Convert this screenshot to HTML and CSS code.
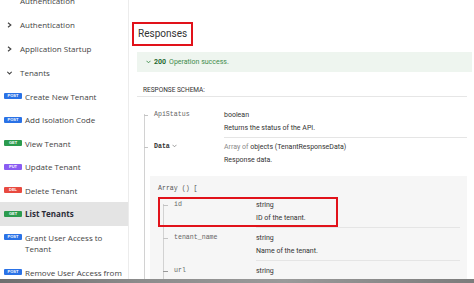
FILE: index.html
```html
<!DOCTYPE html>
<html>
<head>
<meta charset="utf-8">
<link rel="stylesheet" href="styles.css">
</head>
<body>
<div class="page">
  <nav class="sidebar">
    <ul class="nav">
      <li class="cat"><span class="chev-space"></span>Authentication</li>
      <li class="cat"><svg class="chev" viewBox="0 0 5 6"><path d="M1 0.8 L3.8 3 L1 5.2" fill="none" stroke="#444" stroke-width="1.2"/></svg>Authentication</li>
      <li class="cat"><svg class="chev" viewBox="0 0 5 6"><path d="M1 0.8 L3.8 3 L1 5.2" fill="none" stroke="#444" stroke-width="1.2"/></svg>Application Startup</li>
      <li class="cat"><svg class="chev" viewBox="0 0 5 6"><path d="M0.3 1.8 L2.5 4 L4.7 1.8" fill="none" stroke="#444" stroke-width="1.1"/></svg>Tenants</li>
      <li class="ep"><span class="badge post">POST</span><span class="ep-label">Create New Tenant</span></li>
      <li class="ep"><span class="badge post">POST</span><span class="ep-label">Add Isolation Code</span></li>
      <li class="ep"><span class="badge get">GET</span><span class="ep-label">View Tenant</span></li>
      <li class="ep"><span class="badge put">PUT</span><span class="ep-label">Update Tenant</span></li>
      <li class="ep"><span class="badge del">DEL</span><span class="ep-label">Delete Tenant</span></li>
      <li class="ep active"><span class="badge get">GET</span><span class="ep-label">List Tenants</span></li>
      <li class="ep"><span class="badge post">POST</span><span class="ep-label">Grant User Access to Tenant</span></li>
      <li class="ep"><span class="badge post">POST</span><span class="ep-label">Remove User Access from Tenant</span></li>
    </ul>
  </nav>
  <main class="main">
    <h2 class="resp-title">Responses</h2>
    <div class="resp-status">
      <svg class="status-chev" viewBox="0 0 5 4"><path d="M0.5 0.8 L2.5 2.8 L4.5 0.8" fill="none" stroke="#3d8b4b" stroke-width="0.9"/></svg>
      <span class="code">200</span><span class="status-text">Operation success.</span>
    </div>
    <div class="schema-label">Response Schema:</div>
    <div class="tree outer">
      <div class="prop">
        <div class="pname">ApiStatus</div>
        <div class="pdesc"><div>boolean</div><div>Returns the status of the API.</div></div>
      </div>
      <div class="prop">
        <div class="pname strong">Data<svg class="data-chev" viewBox="0 0 5 4"><path d="M0.5 0.8 L2.5 2.8 L4.5 0.8" fill="none" stroke="#777" stroke-width="0.7"/></svg></div>
        <div class="pdesc nob"><div><span class="muted">Array of</span> objects (TenantResponseData)</div><div>Response data.</div></div>
      </div>
      <div class="array-box">
        <div class="array-title">Array () [</div>
        <div class="tree inner">
          <div class="prop">
            <div class="highlight"></div>
            <div class="pname">id</div>
            <div class="pdesc"><div>string</div><div>ID of the tenant.</div></div>
          </div>
          <div class="prop">
            <div class="pname">tenant_name</div>
            <div class="pdesc"><div>string</div><div>Name of the tenant.</div></div>
          </div>
          <div class="prop">
            <div class="pname dark-tick">url</div>
            <div class="pdesc"><div>string</div><div>URL of the tenant.</div></div>
          </div>
        </div>
      </div>
    </div>
  </main>
</div>
<div class="bottom-shade"></div>
</body>
</html>
```
FILE: styles.css
```css
html, body {
  margin: 0;
  padding: 0;
}
body {
  width: 474px;
  height: 283px;
  overflow: hidden;
  background: #fff;
  font-family: Roboto, "Liberation Sans", sans-serif;
  color: #333;
}
.page {
  display: flex;
  height: 283px;
}

/* sidebar */
.sidebar {
  width: 128px;
  flex: none;
  border-right: 1px solid #ececec;
  font-family: "Open Sans", "Noto Sans", sans-serif;
  font-size: 8px;
  color: #444;
  overflow: hidden;
}
.nav {
  list-style: none;
  margin: -11.5px 0 0;
  padding: 0;
}
.cat {
  height: 24px;
  display: flex;
  align-items: center;
  padding-left: 7px;
}
.chev, .chev-space {
  width: 5px;
  height: 6px;
  margin-right: 8px;
  flex: none;
}
.ep {
  display: flex;
  align-items: flex-start;
  padding: 6px 4px 6px 4px;
  line-height: 11.5px;
}
.ep.active {
  background: #e4e4e4;
  font-weight: 700;
  color: #2c2c38;
}
.badge {
  flex: none;
  width: 18px;
  height: 6px;
  margin-top: 2.75px;
  margin-right: 3px;
  border-radius: 1px;
  color: #fff;
  font-family: "Liberation Sans", sans-serif;
  font-weight: 700;
  font-size: 4px;
  line-height: 6px;
  text-align: center;
}
.badge.post { background: #2a72e6; }
.badge.get { background: #2b9b4e; }
.badge.put { background: #8a5cf2; }
.badge.del { background: #e84a40; }
.ep-label {
  min-width: 0;
}

/* main */
.main {
  flex: 1;
  min-width: 0;
  padding: 22px 2px 0 8px;
}
.resp-title {
  margin: 0 0 6px -5px;
  width: 61px;
  height: 24px;
  box-sizing: border-box;
  border: 2px solid #e1121a;
  padding-left: 4px;
  font-size: 10px;
  font-weight: 400;
  line-height: 20px;
  color: #333;
}
.resp-status {
  height: 20px;
  background: #eef5ef;
  display: flex;
  align-items: center;
  padding-left: 9px;
  font-size: 7px;
  color: #3d8b4b;
}
.status-chev {
  width: 5px;
  height: 4px;
  margin-right: 3px;
}
.code {
  font-weight: 700;
  color: #1f6a30;
  margin-right: 3px;
}
.schema-label {
  margin: 13px 5px 0 0;
  padding-left: 6px;
  font-size: 6.5px;
  line-height: 11px;
  text-transform: uppercase;
  border-bottom: 1px solid #e6e6e6;
  color: #333;
}

/* property tree */
.tree {
  background: linear-gradient(#d2d2d2, #d2d2d2) no-repeat;
  background-size: 1px 100%;
}
.tree.outer {
  margin: 9px 5px 0 7px;
  background-position: 0 8px;
}
.prop {
  display: flex;
  position: relative;
  padding-top: 3px;
}
.pname {
  position: relative;
  flex: none;
  width: 80px;
  box-sizing: border-box;
  padding-left: 10px;
  font-family: "Liberation Mono", monospace;
  font-size: 6.6px;
  line-height: 12.5px;
  color: #666;
}
.pname::before {
  content: "";
  position: absolute;
  left: 0;
  top: 6px;
  width: 4px;
  height: 1px;
  background: #c4c4c4;
}
.pname.strong {
  font-weight: 700;
  color: #333;
}
.data-chev {
  width: 5px;
  height: 4px;
  margin-left: 2px;
}
.pdesc {
  flex: 1;
  min-width: 0;
  font-size: 7px;
  line-height: 12.5px;
  padding-bottom: 3px;
  border-bottom: 1px solid #e5e5e5;
  color: #333;
}
.pdesc.nob {
  border-bottom: none;
}
.muted {
  color: #8a8a8a;
}
.array-box {
  margin: 7px 0 0 6px;
  padding: 6.75px 7px 0 8px;
  background: #f6f6f6;
  height: 200px;
}
.array-title {
  font-family: "Liberation Mono", monospace;
  font-size: 6.6px;
  line-height: 12.5px;
  color: #555;
}
.tree.inner {
  margin-left: 5px;
  background-position: 0 9px;
}
.tree.inner .prop {
  padding-top: 4px;
}
.tree.inner .pname {
  width: 93px;
  padding-left: 11px;
}
.tree.inner .pname::before {
  width: 5px;
}
.pname.dark-tick::before {
  background: #999;
  width: 7px;
}
.highlight {
  position: absolute;
  left: -5px;
  top: 1.75px;
  width: 180px;
  height: 30px;
  box-sizing: border-box;
  border: 2px solid #e1121a;
}
.bottom-shade {
  position: fixed;
  left: 0;
  right: 0;
  bottom: 0;
  height: 4px;
  background: linear-gradient(to right, #6f6f6f, #8c8c8c 30%, #9a9a9a 60%, #7c7c7c);
}
```
